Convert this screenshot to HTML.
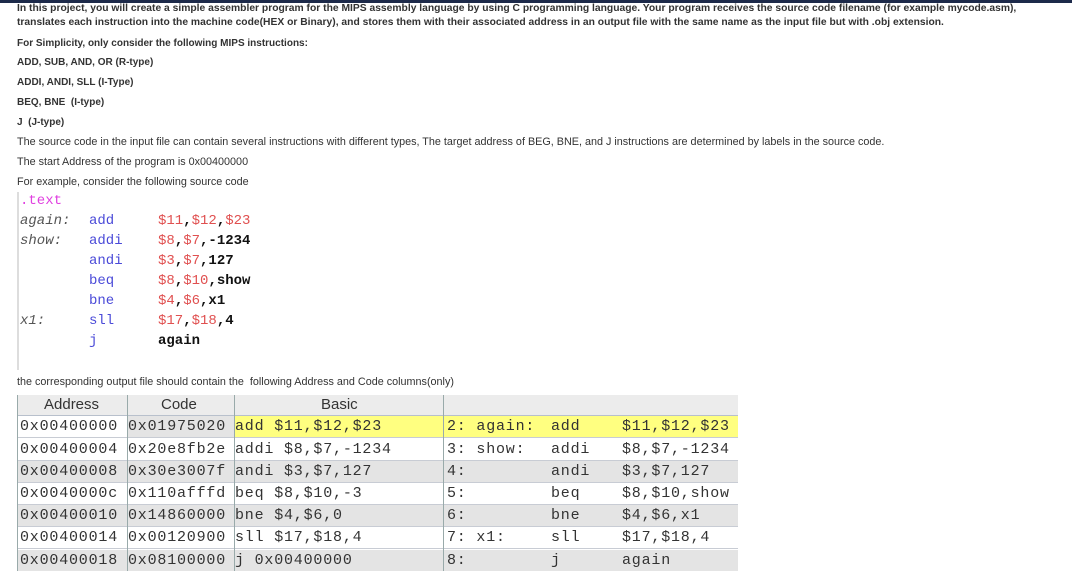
<!DOCTYPE html>
<html><head><meta charset="utf-8"><style>
body{margin:0;width:1072px;height:571px;overflow:hidden;background:#fff;position:relative;font-family:"Liberation Sans",sans-serif;}
.topbar{position:absolute;left:0;top:0;width:1072px;height:3px;background:#1d2a4a}
.t{position:absolute;left:17px;font-size:10.8px;color:#333;white-space:nowrap;line-height:12px}
.b{font-weight:bold;font-size:10px}
.code{position:absolute;left:17px;top:192px;width:2px;height:178px;background:#ddd}
.c{position:absolute;font-family:"Liberation Mono",monospace;font-size:14px;line-height:15px;white-space:nowrap}
.lab{color:#555;font-style:italic}
.op{color:#4a4ad8}
.r{color:#e05050}
.k{color:#111;font-weight:bold}
.tbl{position:absolute;left:17px;top:395px;width:721px;font-family:"Liberation Mono",monospace;font-size:15px;color:#333;letter-spacing:0.8px}
.hd{position:absolute;left:0;top:0;width:721px;height:20px;background:#ececec;border-bottom:1px solid #b8c0cc}
.hd span{position:absolute;top:1px;font-family:"Liberation Sans",sans-serif;font-size:15px;color:#333;letter-spacing:0}
.row{position:absolute;left:0;width:721px;height:21px;border-bottom:1px solid #c8ccd4}
.row div{position:absolute;top:0;height:21px;line-height:21px;white-space:nowrap}
.g{background:#e4e4e4}
.vl{position:absolute;top:0;width:1px;height:176px;background:#9aa}
</style></head><body>
<div class="topbar"></div>
<div class="t b" style="top:3px;font-size:10.3px">In this project, you will create a simple assembler program for the MIPS assembly language by using C programming language. Your program receives the source code filename (for example mycode.asm),</div>
<div class="t b" style="top:17px;font-size:10.3px">translates each instruction into the machine code(HEX or Binary), and stores them with their associated address in an output file with the same name as the input file but with .obj extension.</div>
<div class="t b" style="top:38px">For Simplicity, only consider the following MIPS instructions:</div>
<div class="t b" style="top:57px">ADD, SUB, AND, OR (R-type)</div>
<div class="t b" style="top:77px">ADDI, ANDI, SLL (I-Type)</div>
<div class="t b" style="top:97px">BEQ, BNE &nbsp;(I-type)</div>
<div class="t b" style="top:117px">J &nbsp;(J-type)</div>
<div class="t" style="top:136px">The source code in the input file can contain several instructions with different types, The target address of BEG, BNE, and J instructions are determined by labels in the source code.</div>
<div class="t" style="top:156px">The start Address of the program is 0x00400000</div>
<div class="t" style="top:176px">For example, consider the following source code</div>
<div class="code"></div>
<div class="c" style="left:20px;top:194px;color:#e040e0">.text</div>
<div class="c lab" style="left:20px;top:214px">again:</div>
<div class="c lab" style="left:20px;top:234px">show:</div>
<div class="c lab" style="left:20px;top:314px">x1:</div>
<div class="c op" style="left:89px;top:214px">add</div>
<div class="c op" style="left:89px;top:234px">addi</div>
<div class="c op" style="left:89px;top:254px">andi</div>
<div class="c op" style="left:89px;top:274px">beq</div>
<div class="c op" style="left:89px;top:294px">bne</div>
<div class="c op" style="left:89px;top:314px">sll</div>
<div class="c op" style="left:89px;top:334px">j</div>
<div class="c" style="left:158px;top:214px"><span class="r">$11</span><span class="k">,</span><span class="r">$12</span><span class="k">,</span><span class="r">$23</span></div>
<div class="c" style="left:158px;top:234px"><span class="r">$8</span><span class="k">,</span><span class="r">$7</span><span class="k">,-1234</span></div>
<div class="c" style="left:158px;top:254px"><span class="r">$3</span><span class="k">,</span><span class="r">$7</span><span class="k">,127</span></div>
<div class="c" style="left:158px;top:274px"><span class="r">$8</span><span class="k">,</span><span class="r">$10</span><span class="k">,show</span></div>
<div class="c" style="left:158px;top:294px"><span class="r">$4</span><span class="k">,</span><span class="r">$6</span><span class="k">,x1</span></div>
<div class="c" style="left:158px;top:314px"><span class="r">$17</span><span class="k">,</span><span class="r">$18</span><span class="k">,4</span></div>
<div class="c k" style="left:158px;top:334px">again</div>
<div class="t" style="top:376px">the corresponding output file should contain the &nbsp;following Address and Code columns(only)</div>
<div class="tbl">
<div class="hd"><span style="left:27px">Address</span><span style="left:144px">Code</span><span style="left:304px">Basic</span></div>

<div class="row" style="top:21px"><div style="left:110px;width:107px" class="g"></div><div style="left:217px;width:504px;background:#ffff80"></div>
<div style="left:3px">0x00400000</div><div style="left:111px">0x01975020</div><div style="left:218px">add $11,$12,$23</div><div style="left:430px">2: again:</div><div style="left:534px">add</div><div style="left:605px">$11,$12,$23</div></div>

<div class="row" style="top:44px"><div style="left:3px">0x00400004</div><div style="left:111px">0x20e8fb2e</div><div style="left:218px">addi $8,$7,-1234</div><div style="left:430px">3: show:</div><div style="left:534px">addi</div><div style="left:605px">$8,$7,-1234</div></div>

<div class="row g" style="top:66px"><div style="left:3px">0x00400008</div><div style="left:111px">0x30e3007f</div><div style="left:218px">andi $3,$7,127</div><div style="left:430px">4:</div><div style="left:534px">andi</div><div style="left:605px">$3,$7,127</div></div>

<div class="row" style="top:88px"><div style="left:3px">0x0040000c</div><div style="left:111px">0x110afffd</div><div style="left:218px">beq $8,$10,-3</div><div style="left:430px">5:</div><div style="left:534px">beq</div><div style="left:605px">$8,$10,show</div></div>

<div class="row g" style="top:110px"><div style="left:3px">0x00400010</div><div style="left:111px">0x14860000</div><div style="left:218px">bne $4,$6,0</div><div style="left:430px">6:</div><div style="left:534px">bne</div><div style="left:605px">$4,$6,x1</div></div>

<div class="row" style="top:132px"><div style="left:3px">0x00400014</div><div style="left:111px">0x00120900</div><div style="left:218px">sll $17,$18,4</div><div style="left:430px">7: x1:</div><div style="left:534px">sll</div><div style="left:605px">$17,$18,4</div></div>

<div class="row g" style="top:155px;border:none"><div style="left:3px">0x00400018</div><div style="left:111px">0x08100000</div><div style="left:218px">j 0x00400000</div><div style="left:430px">8:</div><div style="left:534px">j</div><div style="left:605px">again</div></div>

<div class="vl" style="left:0"></div>
<div class="vl" style="left:110px"></div>
<div class="vl" style="left:217px"></div>
<div class="vl" style="left:426px"></div>
</div>
</body></html>
